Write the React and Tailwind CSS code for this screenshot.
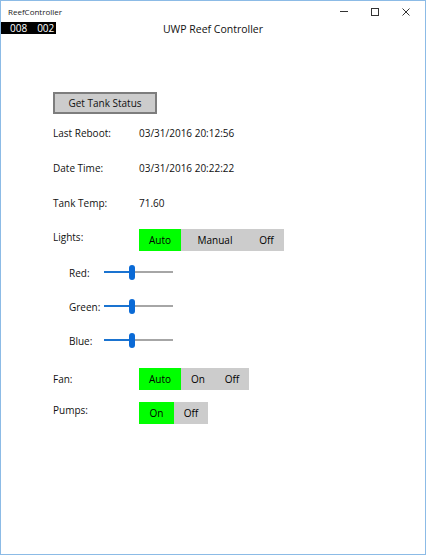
import React from "react";

const font = { fontFamily: '"Open Sans", "Noto Sans", sans-serif' };

function Segmented({ items }) {
  return (
    <div className="flex h-[22px]">
      {items.map((it, i) => (
        <div
          key={i}
          className={`flex items-center justify-center text-[10px] text-black ${it.active ? "bg-[#00ff00]" : "bg-[#cccccc]"}`}
          style={{ width: it.w }}
        >
          {it.label}
        </div>
      ))}
    </div>
  );
}

function Slider() {
  return (
    <div className="relative w-[69px] h-[20px] flex items-center">
      <div className="h-[2px] w-[28px] bg-[#1a73d0]" />
      <div className="h-[2px] flex-1 bg-[#a6a6a6]" />
      <div className="absolute left-[25px] top-[3px] w-[6px] h-[15px] rounded-full bg-[#0a6ad6]" />
    </div>
  );
}

function InfoRow({ label, value, mt }) {
  return (
    <div className={`flex items-center h-[20px] ${mt}`}>
      <div className="w-[86px] text-[10px] text-[#111]">{label}</div>
      <div className="text-[10px] text-[#111]">{value}</div>
    </div>
  );
}

function SliderRow({ label, mt }) {
  return (
    <div className={`flex items-center h-[20px] pl-[16px] ${mt}`}>
      <div className="w-[35px] text-[10px] text-[#111] pt-[3px]">{label}</div>
      <Slider />
    </div>
  );
}

export default function App() {
  return (
    <div
      className="relative w-[426px] h-[555px] bg-white border border-[#8cbbe6] overflow-hidden"
      style={font}
    >
      {/* title bar */}
      <div className="flex items-center h-[21px]">
        <div className="pl-[7px] pt-[1px] text-[8px] text-[#222]">ReefController</div>
        <div className="ml-auto flex items-center h-full">
          <div className="w-[31px] flex justify-center">
            <div className="w-[8px] h-[1px] bg-[#333]" />
          </div>
          <div className="w-[31px] flex justify-center">
            <div className="w-[8px] h-[8px] border border-[#333]" />
          </div>
          <div className="w-[31px] flex justify-center mr-[4px]">
            <svg width="8" height="8" viewBox="0 0 8 8">
              <path d="M0.5 0.5 L7.5 7.5 M7.5 0.5 L0.5 7.5" stroke="#333" strokeWidth="1" />
            </svg>
          </div>
        </div>
      </div>

      {/* frame counter overlay */}
      <div className="absolute left-0 top-[21px] w-[55px] h-[12px] bg-black flex items-center text-white text-[10px] leading-none">
        <span className="pl-[9px]">008</span>
        <span className="pl-[10px]">002</span>
      </div>

      {/* header */}
      <div className="h-[15px] flex items-center justify-center text-[10.5px] text-[#111]">
        UWP Reef Controller
      </div>

      {/* content */}
      <div className="pl-[52px] flex flex-col">
        <div className="mt-[55px]">
          <div className="w-[104px] h-[22px] bg-[#cccccc] border-2 border-[#7d7d7d] flex items-center justify-center text-[10px] text-[#111]">
            Get Tank Status
          </div>
        </div>

        <InfoRow label="Last Reboot:" value="03/31/2016 20:12:56" mt="mt-[9px]" />
        <InfoRow label="Date Time:" value="03/31/2016 20:22:22" mt="mt-[15px]" />
        <InfoRow label="Tank Temp:" value="71.60" mt="mt-[15px]" />

        <div className="flex items-start mt-[16px]">
          <div className="w-[86px] text-[10px] text-[#111] leading-[16px]">Lights:</div>
          <Segmented
            items={[
              { label: "Auto", w: 42, active: true },
              { label: "Manual", w: 68 },
              { label: "Off", w: 35 },
            ]}
          />
        </div>

        <SliderRow label="Red:" mt="mt-[11px]" />
        <SliderRow label="Green:" mt="mt-[14px]" />
        <SliderRow label="Blue:" mt="mt-[14px]" />

        <div className="flex items-center mt-[18px]">
          <div className="w-[86px] text-[10px] text-[#111]">Fan:</div>
          <Segmented
            items={[
              { label: "Auto", w: 42, active: true },
              { label: "On", w: 34 },
              { label: "Off", w: 34 },
            ]}
          />
        </div>

        <div className="flex items-start mt-[12px]">
          <div className="w-[86px] text-[10px] text-[#111] leading-[16px]">Pumps:</div>
          <Segmented
            items={[
              { label: "On", w: 35, active: true },
              { label: "Off", w: 34 },
            ]}
          />
        </div>
      </div>
    </div>
  );
}
